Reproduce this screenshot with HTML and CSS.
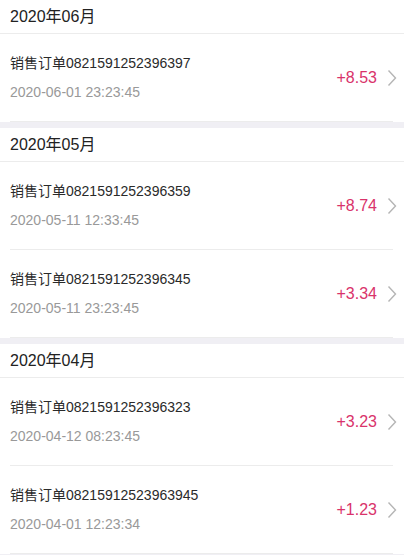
FILE: index.html
```html
<!DOCTYPE html>
<html>
<head>
  <meta charset="utf-8">
  <title>账单明细</title>
  <link rel="stylesheet" href="styles.css">
</head>
<body>
  <div class="group">
    <div class="month">2020年06月</div>
    <div class="item">
      <div class="info">
        <div class="title">销售订单0821591252396397</div>
        <div class="time">2020-06-01 23:23:45</div>
      </div>
      <div class="amount">+8.53</div>
      <svg class="arrow" viewBox="0 0 10 18"><path d="M1.5 1.5 L8.5 9 L1.5 16.5"/></svg>
    </div>
  </div>

  <div class="group">
    <div class="month">2020年05月</div>
    <div class="item">
      <div class="info">
        <div class="title">销售订单0821591252396359</div>
        <div class="time">2020-05-11 12:33:45</div>
      </div>
      <div class="amount">+8.74</div>
      <svg class="arrow" viewBox="0 0 10 18"><path d="M1.5 1.5 L8.5 9 L1.5 16.5"/></svg>
    </div>
    <div class="item">
      <div class="info">
        <div class="title">销售订单0821591252396345</div>
        <div class="time">2020-05-11 23:23:45</div>
      </div>
      <div class="amount">+3.34</div>
      <svg class="arrow" viewBox="0 0 10 18"><path d="M1.5 1.5 L8.5 9 L1.5 16.5"/></svg>
    </div>
  </div>

  <div class="group">
    <div class="month">2020年04月</div>
    <div class="item">
      <div class="info">
        <div class="title">销售订单0821591252396323</div>
        <div class="time">2020-04-12 08:23:45</div>
      </div>
      <div class="amount">+3.23</div>
      <svg class="arrow" viewBox="0 0 10 18"><path d="M1.5 1.5 L8.5 9 L1.5 16.5"/></svg>
    </div>
    <div class="item">
      <div class="info">
        <div class="title">销售订单08215912523963945</div>
        <div class="time">2020-04-01 12:23:34</div>
      </div>
      <div class="amount">+1.23</div>
      <svg class="arrow" viewBox="0 0 10 18"><path d="M1.5 1.5 L8.5 9 L1.5 16.5"/></svg>
    </div>
  </div>
</body>
</html>
```

FILE: styles.css
```css
/* bill list */
body {
  margin: 0;
  font-family: "Liberation Sans", "Noto Sans CJK SC", sans-serif;
  background-color: #fff;
  color: #333;
}
.group {
  border-bottom: 6px solid #f0eff4;
}
.month {
  height: 33px;
  line-height: 33px;
  padding: 0 10px;
  font-size: 16px;
  color: #222;
  border-bottom: 1px solid #ececec;
}
/* divider stops short of the right edge, the arrow does not */
.item {
  display: flex;
  align-items: center;
  height: 87px;
  margin-left: 10px;
  padding-right: 7px;
  padding-bottom: 1px;
  background: linear-gradient(#ececec, #ececec) no-repeat left bottom / calc(100% - 11px) 1px;
}
.info {
  flex: 1;
}
.title {
  font-size: 14px;
  line-height: 20px;
  color: #2a2a2a;
  margin-bottom: 9px;
}
.time {
  font-size: 14px;
  line-height: 20px;
  color: #999;
}
.amount {
  font-size: 16px;
  color: #d9336b;
  margin-right: 10px;
}
.arrow {
  width: 10px;
  height: 18px;
  fill: none;
  stroke: #b5b5b5;
  stroke-width: 1.4;
}
```
